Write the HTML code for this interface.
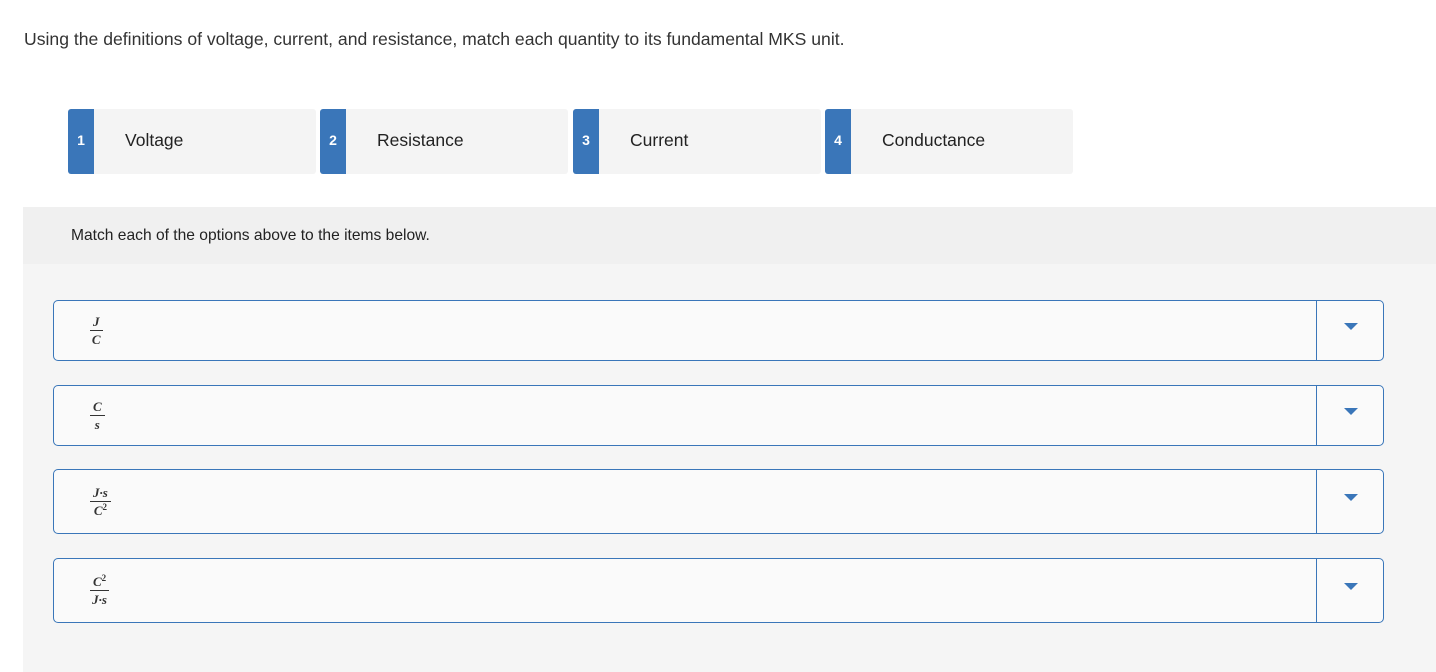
<!DOCTYPE html>
<html><head><style>
body{margin:0;background:#fff;font-family:"Liberation Sans",Arial,sans-serif;color:#222;width:1436px;height:672px;overflow:hidden;position:relative}
.q{position:absolute;left:24px;top:29px;font-size:17.6px;color:#333}
.tile{position:absolute;top:109px;width:248px;height:65px;background:#f4f4f4;border-radius:3px;overflow:hidden}
.tile .n{position:absolute;left:0;top:0;width:26px;height:65px;background:#3a76b9;color:#fff;font-weight:bold;font-size:14px;text-align:center;line-height:63px}
.tile .t{position:absolute;left:57px;top:0;line-height:62px;font-size:17.5px;color:#222}
.panel{position:absolute;left:23px;top:207px;width:1413px;height:465px;background:#f5f5f5}
.head{position:absolute;left:0;top:0;width:100%;height:57px;background:#f0f0f0}
.head span{position:absolute;left:48px;top:20px;font-size:15.6px;color:#222}
.box{position:absolute;left:30px;width:1329px;background:#fafafa;border:1px solid #3a76b9;border-radius:5px}
.box .div{position:absolute;left:1262px;top:0;bottom:0;border-left:1px solid #3a76b9}
.box .tri{position:absolute;left:1290px;top:50%;margin-top:-8px;width:0;height:0;border-left:7px solid transparent;border-right:7px solid transparent;border-top:7px solid #3a76b9}
.fr{position:absolute;left:36px;top:50%;transform:translateY(-50%);display:inline-flex;flex-direction:column;align-items:center;font-family:"Liberation Serif",serif;font-style:italic;font-weight:bold;font-size:13px;color:#333;line-height:14px}
.fr .nu{border-bottom:1px solid #333;padding:0 3px 1px}
.fr .de{padding-top:2px}
sup{font-size:9px;line-height:0;font-style:normal;vertical-align:5px}
</style></head><body>
<div class="q">Using the definitions of voltage, current, and resistance, match each quantity to its fundamental MKS unit.</div>
<div class="tile" style="left:68px"><div class="n">1</div><div class="t">Voltage</div></div>
<div class="tile" style="left:320px"><div class="n">2</div><div class="t">Resistance</div></div>
<div class="tile" style="left:573px"><div class="n">3</div><div class="t">Current</div></div>
<div class="tile" style="left:825px"><div class="n">4</div><div class="t">Conductance</div></div>
<div class="panel">
<div class="head"><span>Match each of the options above to the items below.</span></div>
<div class="box" style="top:93px;height:59px"><div class="fr"><span class="nu">J</span><span class="de">C</span></div><div class="div"></div><div class="tri"></div></div>
<div class="box" style="top:178px;height:59px"><div class="fr"><span class="nu">C</span><span class="de">s</span></div><div class="div"></div><div class="tri"></div></div>
<div class="box" style="top:262px;height:63px"><div class="fr"><span class="nu">J·s</span><span class="de">C<sup>2</sup></span></div><div class="div"></div><div class="tri"></div></div>
<div class="box" style="top:351px;height:63px"><div class="fr"><span class="nu">C<sup>2</sup></span><span class="de">J·s</span></div><div class="div"></div><div class="tri"></div></div>
</div>
</body></html>
